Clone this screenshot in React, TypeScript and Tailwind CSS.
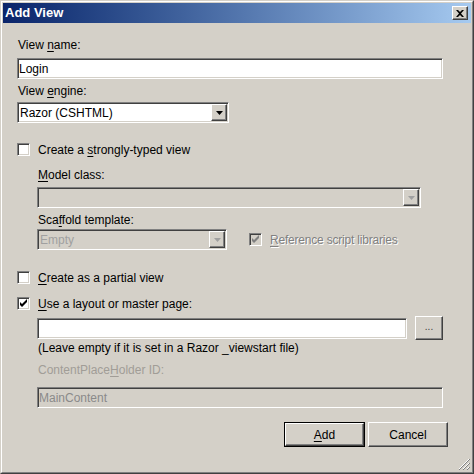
import React from "react";

const sunken =
  "border border-t-[#808080] border-l-[#808080] border-b-white border-r-white shadow-[inset_1px_1px_0_#404040,inset_-1px_-1px_0_#d4d0c8]";
const raised =
  "border border-t-white border-l-white border-b-[#404040] border-r-[#404040] shadow-[inset_-1px_-1px_0_#808080]";

function Key({ children }: { children: React.ReactNode }) {
  return <span className="underline underline-offset-[2px]">{children}</span>;
}

function Arrow({ disabled }: { disabled?: boolean }) {
  return (
    <div className={`w-[16px] h-[17px] bg-[#d4d0c8] flex items-center justify-center ${raised}`}>
      <svg width="7" height="4" viewBox="0 0 7 4">
        <path d="M0 0h7L3.5 4z" fill={disabled ? "#a0a0a0" : "#000"} />
      </svg>
    </div>
  );
}

function Select({
  width,
  value,
  disabled,
  className = "",
}: {
  width: string;
  value?: string;
  disabled?: boolean;
  className?: string;
}) {
  return (
    <div
      className={`${width} h-[21px] flex items-center justify-between pl-[2px] pr-[1px] ${sunken} ${
        disabled ? "bg-[#d4d0c8] text-[#a0a0a0]" : "bg-white text-black"
      } ${className}`}
    >
      <span>{value}</span>
      <Arrow disabled={disabled} />
    </div>
  );
}

function Check({ checked, disabled }: { checked?: boolean; disabled?: boolean }) {
  return (
    <div
      className={`w-[13px] h-[13px] shrink-0 flex items-center justify-center ${sunken} ${
        disabled ? "bg-[#d4d0c8]" : "bg-white"
      }`}
    >
      {checked && (
        <svg width="9" height="9" viewBox="0 0 9 9">
          <path d="M1 3L3 5L8 0V3L3 8L1 6Z" fill={disabled ? "#808080" : "#000"} />
        </svg>
      )}
    </div>
  );
}

function CheckRow({
  checked,
  className = "",
  children,
}: {
  checked?: boolean;
  className?: string;
  children: React.ReactNode;
}) {
  return (
    <div className={`flex items-center h-[13px] ml-[14px] ${className}`}>
      <Check checked={checked} />
      <span className="ml-[8px]">{children}</span>
    </div>
  );
}

function Button({
  children,
  isDefault,
  className = "",
}: {
  children: React.ReactNode;
  isDefault?: boolean;
  className?: string;
}) {
  const inner = (
    <div
      className={`h-full w-full bg-[#d4d0c8] flex items-center justify-center ${raised}`}
    >
      {children}
    </div>
  );
  return isDefault ? (
    <div className={`border border-black ${className}`}>{inner}</div>
  ) : (
    <div className={className}>{inner}</div>
  );
}

export default function App() {
  return (
    <div className="relative w-[474px] h-[474px] bg-[#d4d0c8] border border-t-[#d4d0c8] border-l-[#d4d0c8] border-b-[#404040] border-r-[#404040] font-['Liberation_Sans',Arial,sans-serif] text-[12px] leading-[14px] text-black">
      <div className="h-full w-full border border-t-white border-l-white border-b-[#808080] border-r-[#808080] p-[1px] flex flex-col">
        {/* title bar */}
        <div className="h-[20px] shrink-0 flex items-center justify-between bg-gradient-to-r from-[#0a246a] to-[#a6caf0] pl-[2px] pr-[3px]">
          <span className="text-white font-bold text-[13px] leading-[16px]">Add View</span>
          <div className={`w-[16px] h-[14px] bg-[#d4d0c8] flex items-center justify-center ${raised}`}>
            <svg width="8" height="7" viewBox="0 0 8 7">
              <path
                d="M0 0h2l2 2 2-2h2L5 3.5 8 7H6L4 5 2 7H0l3-3.5z"
                fill="#000"
              />
            </svg>
          </div>
        </div>

        {/* body */}
        <div className="flex flex-col flex-1">
          <div className="mt-[15px] ml-[15px] h-[14px]">
            View <Key>n</Key>ame:
          </div>
          <div className={`mt-[6px] ml-[14px] w-[426px] h-[21px] bg-white flex items-center pl-[1px] ${sunken}`}>
            Login
          </div>

          <div className="mt-[5px] ml-[15px] h-[14px]">
            View <Key>e</Key>ngine:
          </div>
          <Select width="w-[212px]" value="Razor (CSHTML)" className="mt-[4px] ml-[14px]" />

          <CheckRow className="mt-[20px]">
            Create a <Key>s</Key>trongly-typed view
          </CheckRow>

          <div className="mt-[12px] ml-[35px] h-[14px]">
            <Key>M</Key>odel class:
          </div>
          <Select width="w-[384px]" disabled className="mt-[5px] ml-[34px]" />

          <div className="mt-[5px] ml-[35px] h-[14px]">
            Sca<Key>f</Key>fold template:
          </div>
          <div className="mt-[2px] ml-[34px] flex items-center h-[21px]">
            <Select width="w-[190px]" value="Empty" disabled />
            <div className="ml-[22px] flex items-center">
              <Check checked disabled />
              <span className="ml-[8px] text-[#808080] [text-shadow:1px_1px_0_#fff] tracking-[-0.2px]">
                <Key>R</Key>eference script libraries
              </span>
            </div>
          </div>

          <CheckRow className="mt-[21px]">
            <Key>C</Key>reate as a partial view
          </CheckRow>
          <CheckRow checked className="mt-[13px]">
            <Key>U</Key>se a layout or master page:
          </CheckRow>

          <div className="mt-[6px] ml-[34px] flex items-center h-[24px]">
            <div className={`w-[370px] h-[21px] bg-white ${sunken}`} />
            <Button className="ml-[8px] w-[28px] h-[24px]">
              <span className="text-[10px] leading-[10px] text-[#404040] -mt-[2px]">...</span>
            </Button>
          </div>

          <div className="mt-[1px] ml-[35px] h-[14px]">
            (Leave empty if it is set in a Razor _viewstart file)
          </div>

          <div className="mt-[8px] ml-[35px] h-[14px] text-[#a19d97]">
            ContentPlace<Key>H</Key>older ID:
          </div>
          <div
            className={`mt-[10px] ml-[34px] w-[406px] h-[21px] bg-[#d4d0c8] flex items-center pl-[1px] text-[#8a8a8a] ${sunken}`}
          >
            MainContent
          </div>

          <div className="mt-[14px] mr-[23px] flex justify-end gap-[3px]">
            <Button isDefault className="w-[81px] h-[25px]">
              <Key>A</Key>dd
            </Button>
            <Button className="w-[80px] h-[25px]">Cancel</Button>
          </div>
        </div>
      </div>

      {/* size grip */}
      <svg
        className="absolute right-[3px] bottom-[3px]"
        width="12"
        height="12"
        viewBox="0 0 12 12"
      >
        <path d="M11 1L1 11M11 5L5 11M11 9L9 11" stroke="#fff" strokeWidth="1" />
        <path d="M12 1L1 12M12 5L5 12M12 9L9 12" stroke="#808080" strokeWidth="1" />
      </svg>
    </div>
  );
}
